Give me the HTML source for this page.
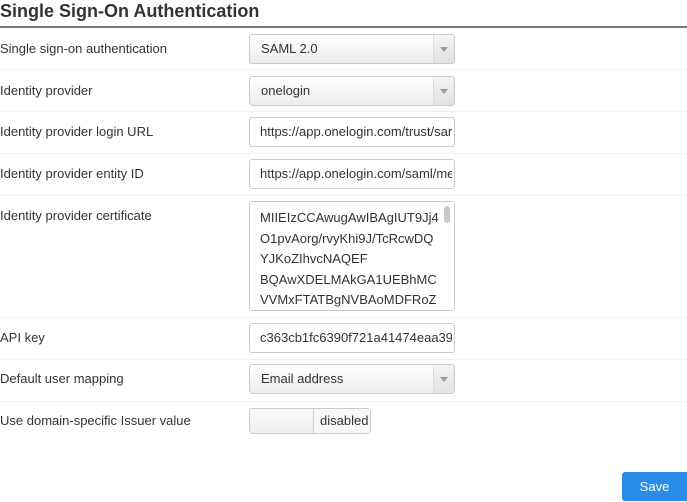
<!DOCTYPE html>
<html><head><style>
body{margin:0;width:687px;height:502px;background:#fff;font-family:"Liberation Sans",sans-serif;color:#333;position:relative;overflow:hidden}
h1{position:absolute;left:0;top:0;margin:0;font-size:18px;font-weight:bold;color:#333;line-height:22px}
.hr{position:absolute;left:0;width:687px;height:2px;background:#777;top:26px}
.sep{position:absolute;left:0;width:687px;height:1px;background:#eee}
.lab{position:absolute;left:0;font-size:13px;line-height:16px}
.box{position:absolute;left:249px;width:206px;border:1px solid #ccc;border-radius:3px;font-size:13px;box-sizing:border-box;background:#fff;overflow:hidden;white-space:nowrap}
.sel{height:30px;background:linear-gradient(#fff,#ececec);line-height:28px;padding-left:11px}
.sel:after{content:"";position:absolute;right:0;top:0;width:20px;height:28px;border-left:1px solid #ddd;background:linear-gradient(#f4f4f4,#e2e2e2)}
.sel i{position:absolute;right:6px;top:12px;width:0;height:0;border-left:4px solid transparent;border-right:4px solid transparent;border-top:5px solid #999;z-index:2}
.inp{height:30px;line-height:28px;padding-left:10px}
.inp span{display:block;width:192px;overflow:hidden}
</style></head><body>
<h1>Single Sign-On Authentication</h1>
<div class="hr"></div>
<div class="sep" style="top:69px"></div><div class="sep" style="top:111px"></div><div class="sep" style="top:153px"></div><div class="sep" style="top:195px"></div><div class="sep" style="top:317px"></div><div class="sep" style="top:359px"></div><div class="sep" style="top:401px"></div>
<div class="lab" style="top:41px">Single sign-on authentication</div>
<div class="box sel" style="top:34px">SAML 2.0<i></i></div>
<div class="lab" style="top:83px">Identity provider</div>
<div class="box sel" style="top:76px">onelogin<i></i></div>
<div class="lab" style="top:124px">Identity provider login URL</div>
<div class="box inp" style="top:117px"><span>https://app.onelogin.com/trust/saml</span></div>
<div class="lab" style="top:166px">Identity provider entity ID</div>
<div class="box inp" style="top:159px"><span>https://app.onelogin.com/saml/meta</span></div>
<div class="lab" style="top:208px">Identity provider certificate</div>
<div class="box" style="top:201px;height:110px;padding:6px 0 0 10px;line-height:20.5px">MIIEIzCCAwugAwIBAgIUT9Jj4<br>O1pvAorg/rvyKhi9J/TcRcwDQ<br>YJKoZIhvcNAQEF<br>BQAwXDELMAkGA1UEBhMC<br>VVMxFTATBgNVBAoMDFRoZ
<div style="position:absolute;right:0;top:0;bottom:0;width:14px;background:#fff"></div>
<div style="position:absolute;right:4px;top:4px;width:6px;height:17px;border-radius:3px;background:#c8c8c8"></div></div>
<div class="lab" style="top:330px">API key</div>
<div class="box inp" style="top:323px"><span>c363cb1fc6390f721a41474eaa39</span></div>
<div class="lab" style="top:371px">Default user mapping</div>
<div class="box sel" style="top:364px">Email address<i></i></div>
<div class="lab" style="top:413px">Use domain-specific Issuer value</div>
<div style="position:absolute;left:249px;top:408px;width:122px;height:26px;border:1px solid #ccc;border-radius:3px;box-sizing:border-box;background:linear-gradient(#fafafa,#eee);font-size:13px">
<div style="position:absolute;left:63px;top:0;bottom:0;right:0;border-left:1px solid #ccc;background:#f7f7f7;line-height:24px;padding-left:6px">disabled</div></div>
<div style="position:absolute;left:622px;top:472px;width:65px;height:29px;background:#2a8ce8;border-radius:3px 0 0 3px;color:#fff;font-size:13px;line-height:29px;text-align:center">Save</div>
</body></html>
